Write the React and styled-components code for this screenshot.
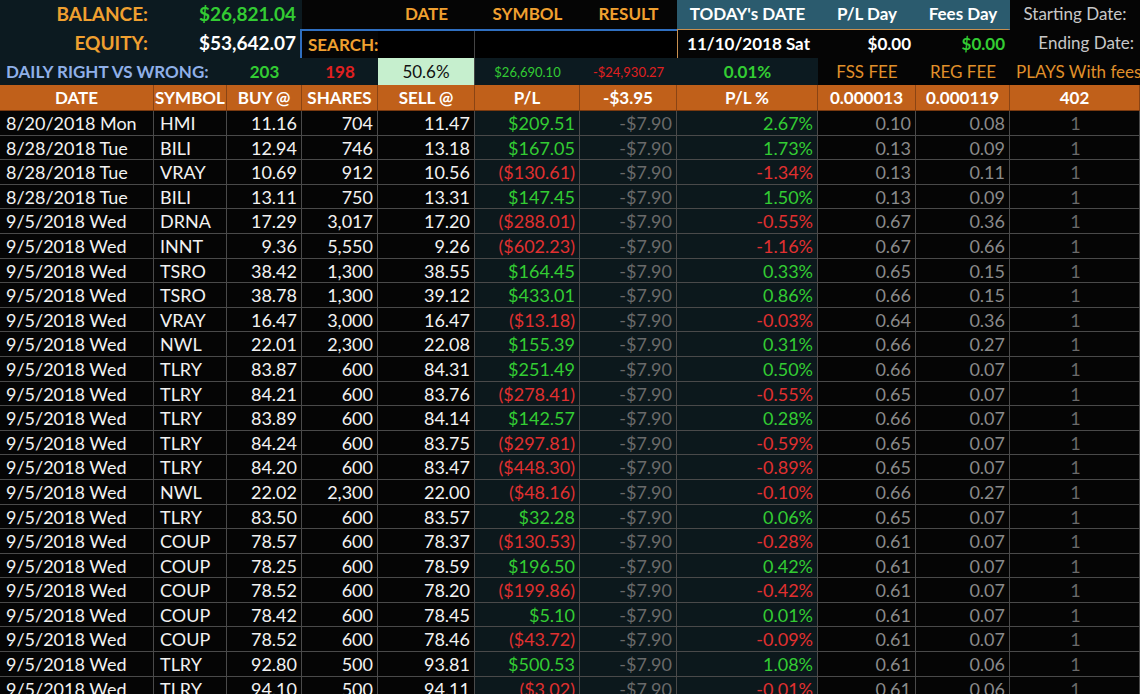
import React from "react";
import styled, { createGlobalStyle } from "styled-components";

const Global = createGlobalStyle`
  body { margin: 0; background: #000; overflow: hidden; }
`;

const cols = "154px 73px 75px 76px 97px 105px 97px 141px 98px 94px 130px";

const rows = [
  ["8/20/2018 Mon", "HMI", "11.16", "704", "11.47", "$209.51", "2.67%", "0.10", "0.08"],
  ["8/28/2018 Tue", "BILI", "12.94", "746", "13.18", "$167.05", "1.73%", "0.13", "0.09"],
  ["8/28/2018 Tue", "VRAY", "10.69", "912", "10.56", "($130.61)", "-1.34%", "0.13", "0.11"],
  ["8/28/2018 Tue", "BILI", "13.11", "750", "13.31", "$147.45", "1.50%", "0.13", "0.09"],
  ["9/5/2018 Wed", "DRNA", "17.29", "3,017", "17.20", "($288.01)", "-0.55%", "0.67", "0.36"],
  ["9/5/2018 Wed", "INNT", "9.36", "5,550", "9.26", "($602.23)", "-1.16%", "0.67", "0.66"],
  ["9/5/2018 Wed", "TSRO", "38.42", "1,300", "38.55", "$164.45", "0.33%", "0.65", "0.15"],
  ["9/5/2018 Wed", "TSRO", "38.78", "1,300", "39.12", "$433.01", "0.86%", "0.66", "0.15"],
  ["9/5/2018 Wed", "VRAY", "16.47", "3,000", "16.47", "($13.18)", "-0.03%", "0.64", "0.36"],
  ["9/5/2018 Wed", "NWL", "22.01", "2,300", "22.08", "$155.39", "0.31%", "0.66", "0.27"],
  ["9/5/2018 Wed", "TLRY", "83.87", "600", "84.31", "$251.49", "0.50%", "0.66", "0.07"],
  ["9/5/2018 Wed", "TLRY", "84.21", "600", "83.76", "($278.41)", "-0.55%", "0.65", "0.07"],
  ["9/5/2018 Wed", "TLRY", "83.89", "600", "84.14", "$142.57", "0.28%", "0.66", "0.07"],
  ["9/5/2018 Wed", "TLRY", "84.24", "600", "83.75", "($297.81)", "-0.59%", "0.65", "0.07"],
  ["9/5/2018 Wed", "TLRY", "84.20", "600", "83.47", "($448.30)", "-0.89%", "0.65", "0.07"],
  ["9/5/2018 Wed", "NWL", "22.02", "2,300", "22.00", "($48.16)", "-0.10%", "0.66", "0.27"],
  ["9/5/2018 Wed", "TLRY", "83.50", "600", "83.57", "$32.28", "0.06%", "0.65", "0.07"],
  ["9/5/2018 Wed", "COUP", "78.57", "600", "78.37", "($130.53)", "-0.28%", "0.61", "0.07"],
  ["9/5/2018 Wed", "COUP", "78.25", "600", "78.59", "$196.50", "0.42%", "0.61", "0.07"],
  ["9/5/2018 Wed", "COUP", "78.52", "600", "78.20", "($199.86)", "-0.42%", "0.61", "0.07"],
  ["9/5/2018 Wed", "COUP", "78.42", "600", "78.45", "$5.10", "0.01%", "0.61", "0.07"],
  ["9/5/2018 Wed", "COUP", "78.52", "600", "78.46", "($43.72)", "-0.09%", "0.61", "0.07"],
  ["9/5/2018 Wed", "TLRY", "92.80", "500", "93.81", "$500.53", "1.08%", "0.61", "0.06"],
  ["9/5/2018 Wed", "TLRY", "94.10", "500", "94.11", "($3.02)", "-0.01%", "0.61", "0.06"],
];

export default function App() {
  return (
    <Sheet>
      <Global />
      <Top>
        <Cell $bg="#0c1a20" $c="#f0a030" $al="right" $big $bold>BALANCE:</Cell>
        <Cell $span={2} $bg="#0c1a20" $c="#33cc33" $al="right" $big $bold>$26,821.04</Cell>
        <Cell $bg="#050505" />
        <Cell $bg="#050505" $c="#f0a030" $bold>DATE</Cell>
        <Cell $bg="#050505" $c="#f0a030" $bold>SYMBOL</Cell>
        <Cell $bg="#050505" $c="#f0a030" $bold>RESULT</Cell>
        <Cell $bg="#2b5b6e" $c="#fff" $bold>TODAY's DATE</Cell>
        <Cell $bg="#2b5b6e" $c="#fff" $bold>P/L Day</Cell>
        <Cell $bg="#2b5b6e" $c="#fff" $bold>Fees Day</Cell>
        <Cell $bg="#050505" $c="#c8c8c8">Starting Date:</Cell>
      </Top>
      <Top>
        <Cell $bg="#0c1a20" $c="#f0a030" $al="right" $big $bold>EQUITY:</Cell>
        <Cell $span={2} $bg="#0c1a20" $c="#fff" $al="right" $big $bold>$53,642.07</Cell>
        <SearchBox>
          <Cell $bg="#050505" $c="#f0a030" $bold $al="left">SEARCH:</Cell>
          <Cell $bg="#000" $line />
          <Cell $bg="#000" $span={2} />
        </SearchBox>
        <TodayBox>
          <Cell $bg="#050505" $c="#fff" $bold>11/10/2018 Sat</Cell>
          <Cell $bg="#050505" $c="#fff" $bold $al="right">$0.00</Cell>
          <Cell $bg="#050505" $c="#33cc33" $bold $al="right">$0.00</Cell>
        </TodayBox>
        <Cell $bg="#050505" $c="#c8c8c8" $al="right">Ending Date:</Cell>
      </Top>
      <Third>
        <Cell $span={2} $bg="#0c1a20" $c="#8fb0e8" $al="left" $bold>DAILY RIGHT VS WRONG:</Cell>
        <Cell $bg="#0c1a20" $c="#33cc33" $bold>203</Cell>
        <Cell $bg="#0c1a20" $c="#e02020" $bold>198</Cell>
        <Cell $bg="#c6efce" $c="#111" $line>50.6%</Cell>
        <Cell $bg="#0c1a20" $c="#33cc33" $small>$26,690.10</Cell>
        <Cell $bg="#0c1a20" $c="#e02020" $small>-$24,930.27</Cell>
        <Cell $bg="#0c1a20" $c="#33cc33" $bold>0.01%</Cell>
        <Cell $bg="#050505" $c="#e0902a">FSS FEE</Cell>
        <Cell $bg="#050505" $c="#e0902a">REG FEE</Cell>
        <Cell $bg="#050505" $c="#e0902a" $al="left">PLAYS With fees</Cell>
      </Third>
      <Head>
        {["DATE", "SYMBOL", "BUY @", "SHARES", "SELL @", "P/L", "-$3.95", "P/L %", "0.000013", "0.000119", "402"].map(
          (h, i) => (
            <HeadCell key={i}>{h}</HeadCell>
          )
        )}
      </Head>
      {rows.map((r, i) => {
        const neg = r[5].startsWith("(");
        const pc = neg ? "#e03030" : "#33cc33";
        return (
          <Row key={i}>
            <D $al="left">{r[0]}</D>
            <D $al="left">{r[1]}</D>
            <D>{r[2]}</D>
            <D>{r[3]}</D>
            <D>{r[4]}</D>
            <D $bg="#0c181c" $c={pc}>{r[5]}</D>
            <D $bg="#0c181c" $c="#6a6a6a">-$7.90</D>
            <D $bg="#0c181c" $c={pc}>{r[6]}</D>
            <D $c="#8a8a8a">{r[7]}</D>
            <D $c="#8a8a8a">{r[8]}</D>
            <D $c="#6a6a6a" $al="center">1</D>
          </Row>
        );
      })}
    </Sheet>
  );
}

const Sheet = styled.div`
  width: 1140px;
  height: 694px;
  overflow: hidden;
  background: #000;
  font-family: Lato, "Liberation Sans", sans-serif;
`;

const GridRow = styled.div`
  display: grid;
  grid-template-columns: ${cols};
`;

const Top = styled(GridRow)`
  height: 29px;
`;

const Third = styled(GridRow)`
  height: 27px;
`;

const Cell = styled.div`
  grid-column: span ${(p) => p.$span || 1};
  background: ${(p) => p.$bg || "#000"};
  color: ${(p) => p.$c || "#fff"};
  text-align: ${(p) => p.$al || "center"};
  font-size: ${(p) => (p.$small ? "13px" : p.$big ? "19px" : "17px")};
  font-weight: ${(p) => (p.$bold ? 700 : 400)};
  line-height: 28px;
  padding: 0 6px;
  white-space: nowrap;
  overflow: hidden;
  box-sizing: border-box;
  border-right: ${(p) => (p.$line ? "1px solid #444" : "none")};
`;

const SearchBox = styled.div`
  grid-column: span 4;
  display: grid;
  grid-template-columns: 76px 97px 105px 97px;
  border: 2px solid #2f6fc0;
  margin-left: -2px;
  line-height: 25px;
`;

const TodayBox = styled.div`
  grid-column: span 3;
  display: grid;
  grid-template-columns: 141px 98px 94px;
  border: 1px solid #c89050;
  border-right: 2px solid #4f78a8;
  box-sizing: border-box;
`;

const Head = styled(GridRow)`
  height: 25px;
  background: #c0601a;
  border-bottom: 1px solid #7a3a10;
`;

const HeadCell = styled.div`
  color: #fff;
  font-weight: 700;
  font-size: 17px;
  text-align: center;
  line-height: 25px;
  border-right: 1px solid #8a4414;
  white-space: nowrap;
`;

const Row = styled(GridRow)`
  height: 24.6px;
  box-sizing: border-box;
  border-bottom: 1px solid #4a4a4a;
`;

const D = styled.div`
  background: ${(p) => p.$bg || "#050505"};
  color: ${(p) => p.$c || "#f2f2f2"};
  text-align: ${(p) => p.$al || "right"};
  font-size: 18px;
  line-height: 24px;
  padding: 0 4px 0 6px;
  border-right: 1px solid #4a4a4a;
  white-space: nowrap;
  overflow: hidden;
`;
